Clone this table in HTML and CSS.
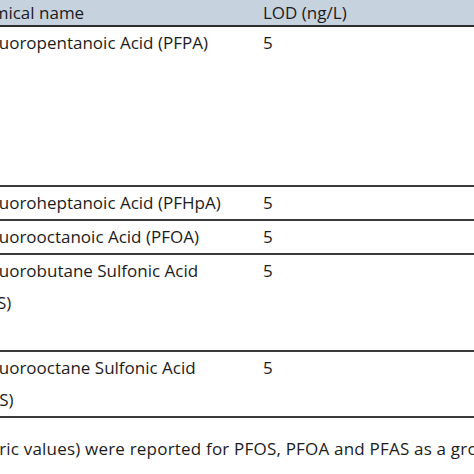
FILE: index.html
```html
<!DOCTYPE html>
<html lang="en">
<head>
<meta charset="utf-8">
<title>LOD table</title>
<link rel="stylesheet" href="styles.css">
</head>
<body>
<div class="viewport">
  <div class="sheet">
    <table class="lod-table">
      <thead>
        <tr class="head-row">
          <th class="col-name head-name">Chemical name</th>
          <th class="col-lod">LOD (ng/L)</th>
        </tr>
      </thead>
      <tbody>
        <tr class="row-5">
          <td class="col-name">Perfluoropentanoic Acid (PFPA)</td>
          <td class="col-lod">5</td>
        </tr>
        <tr class="row-1">
          <td class="col-name">Perfluoroheptanoic Acid (PFHpA)</td>
          <td class="col-lod">5</td>
        </tr>
        <tr class="row-1">
          <td class="col-name">Perfluorooctanoic Acid (PFOA)</td>
          <td class="col-lod">5</td>
        </tr>
        <tr class="row-3">
          <td class="col-name">Perfluorobutane Sulfonic Acid<br>(PFBS)</td>
          <td class="col-lod">5</td>
        </tr>
        <tr class="row-2">
          <td class="col-name">Perfluorooctane Sulfonic Acid<br>(PFOS)</td>
          <td class="col-lod">5</td>
        </tr>
      </tbody>
    </table>
    <p class="note">(numeric values) were reported for PFOS, PFOA and PFAS as a group</p>
  </div>
</div>
</body>
</html>
```

FILE: styles.css
```css
html, body {
  margin: 0;
  padding: 0;
  background: #ffffff;
}

.viewport {
  width: 474px;
  height: 474px;
  overflow: hidden;
}

.sheet {
  margin-left: -38px;
  width: 700px;
  font-family: "Open Sans", "Liberation Sans", sans-serif;
  font-size: 17px;
  color: #1c1c1c;
}

.lod-table {
  border-collapse: collapse;
  width: 700px;
  table-layout: fixed;
}

.lod-table th,
.lod-table td {
  padding: 0;
  text-align: left;
  vertical-align: top;
  font-weight: normal;
  line-height: 32px;
  white-space: nowrap;
}

.col-name {
  width: 301px;
}

.head-row th {
  background: #c7d2df;
  height: 25px;
  line-height: 25px;
  border-bottom: 2px solid #2b2b2b;
}

.head-name {
  text-indent: 0;
}

.lod-table tbody tr {
  border-bottom: 2px solid #3a3a3a;
}

.row-1 td { height: 32px; }
.row-2 td { height: 62px; }
.row-3 td { height: 95px; }
.row-5 td { height: 158px; }

.note {
  margin: 15px 0 0 0;
  line-height: 32px;
  text-indent: -15px;
  letter-spacing: 0.2px;
  white-space: nowrap;
}
```
